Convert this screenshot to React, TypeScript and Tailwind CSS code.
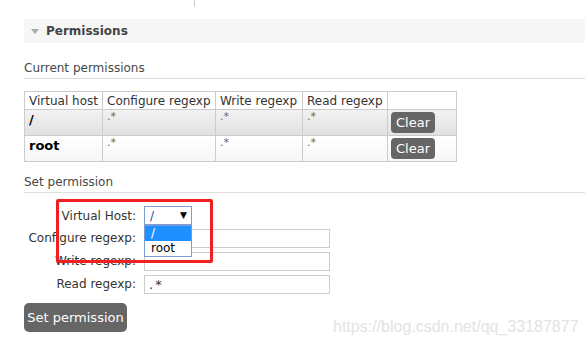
import React from "react";

const rows = [
  { vhost: "/", shaded: true },
  { vhost: "root", shaded: false },
];

const fields = [
  { label: "Configure regexp:", value: "" },
  { label: "Write regexp:", value: "" },
  { label: "Read regexp:", value: ".*" },
];

function ClearButton() {
  return (
    <button className="h-[21px] w-[44px] rounded-[4px] bg-[#666] text-[13px] leading-[21px] text-white">
      Clear
    </button>
  );
}

export default function App() {
  return (
    <div className="relative h-[344px] w-[585px] overflow-hidden bg-white text-[12px] text-[#333] [font-family:'DejaVu_Sans',Verdana,sans-serif]">
      {/* stray divider from the panel above */}
      <div className="ml-[194px] h-[7px] w-px bg-[#ccc]" />

      {/* Permissions header */}
      <div className="ml-[24px] mt-[12px] flex h-[24px] items-center bg-[#f6f6f6]">
        <span className="ml-[7px] h-0 w-0 border-x-[4px] border-t-[5px] border-x-transparent border-t-[#aaa]" />
        <span className="ml-[7px] text-[12px] font-bold text-[#444]">Permissions</span>
      </div>

      <div className="ml-[24px]">
        <h3 className="mt-[18px] border-b border-[#ddd] pb-[2px] text-[12px] leading-[15px] text-[#484848]">
          Current permissions
        </h3>

        <table className="mt-[12px] border-collapse whitespace-nowrap text-[12px]">
          <thead>
            <tr className="h-[18px] leading-[16px]">
              <th className="w-[78px] border border-[#ccc] px-[4px] text-left font-normal">Virtual host</th>
              <th className="w-[113px] border border-[#ccc] px-[4px] text-left font-normal">Configure regexp</th>
              <th className="w-[87px] border border-[#ccc] px-[4px] text-left font-normal">Write regexp</th>
              <th className="w-[85px] border border-[#ccc] px-[4px] text-left font-normal">Read regexp</th>
              <th className="w-[69px] border border-[#ccc]" />
            </tr>
          </thead>
          <tbody>
            {rows.map((r) => (
              <tr
                key={r.vhost}
                className={
                  r.shaded
                    ? "h-[26px] bg-gradient-to-b from-[#f2f2f2] to-[#e0e0e0]"
                    : "h-[26px] bg-gradient-to-b from-white to-[#f6f6f6]"
                }
              >
                <td className="border border-[#ccc] px-[4px] pt-[2px] align-top text-[13px] font-bold leading-[16px] text-black">
                  {r.vhost}
                </td>
                {[0, 1, 2].map((i) => (
                  <td key={i} className="border border-[#ccc] px-[4px] align-top text-[11px] leading-[14px] text-[#666]">
                    .*
                  </td>
                ))}
                <td className="border border-[#ccc] px-[3px] align-middle">
                  <ClearButton />
                </td>
              </tr>
            ))}
          </tbody>
        </table>

        <h3 className="mt-[13px] border-b border-[#ddd] pb-[2px] text-[12px] leading-[15px] text-[#484848]">
          Set permission
        </h3>

        {/* form */}
        <div className="mt-[13px] flex items-center">
          <label className="mr-[8px] w-[112px] whitespace-nowrap text-right text-[12px]">Virtual Host:</label>
          <div className="flex h-[19px] w-[48px] items-center justify-between border border-[#7a9cd3] pl-[5px] pr-[4px]">
            <span className="text-[12px] text-[#1a4ba0]">/</span>
            <span className="text-[9px] text-black">▼</span>
          </div>
        </div>
        <div className="mt-[4px] flex flex-col gap-[4px]">
          {fields.map((f) => (
            <div key={f.label} className="flex items-center">
              <label className="mr-[8px] w-[112px] whitespace-nowrap text-right text-[12px] leading-[19px]">
                {f.label}
              </label>
              <div className="flex h-[19px] w-[186px] items-center border border-[#ccc] px-[4px] text-[13px] tracking-[2px]">
                {f.value}
              </div>
            </div>
          ))}
        </div>

        <button className="mt-[9px] h-[29px] w-[103px] whitespace-nowrap rounded-[5px] bg-[#666] text-[13px] text-white">
          Set permission
        </button>
      </div>

      {/* open dropdown list */}
      <div className="absolute left-[144px] top-[225px] w-[48px] border border-[#7a9cd3] bg-white text-[12px] leading-[15px]">
        <div className="bg-[#1e90ff] px-[6px] text-white">/</div>
        <div className="px-[6px] text-black">root</div>
      </div>

      {/* red annotation box */}
      <div className="pointer-events-none absolute left-[56px] top-[199px] h-[64px] w-[157px] rounded-[2px] border-[3px] border-[#f02020]" />

      {/* watermark */}
      <div className="absolute left-[333px] top-[315px] text-[16px] text-[#e3e3e3] [font-family:'Liberation_Sans',Arial,sans-serif]">
        https://blog.csdn.net/qq_33187877
      </div>
    </div>
  );
}
